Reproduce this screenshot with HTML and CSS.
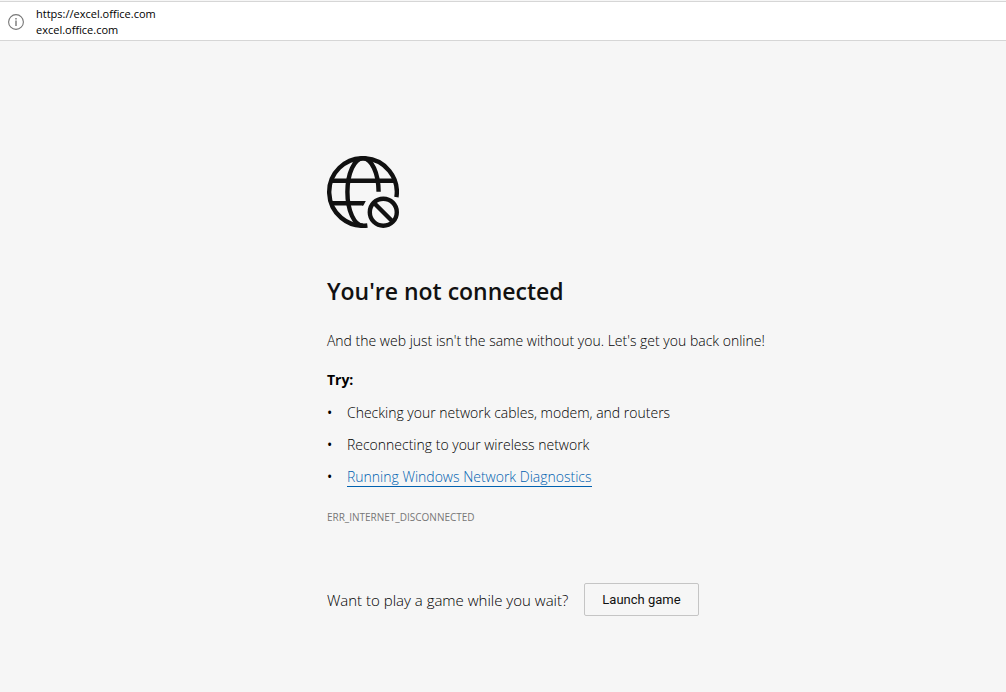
FILE: index.html
```
<!DOCTYPE html>
<html lang="en">
<head>
   <meta charset="UTF-8">
   <meta name="viewport" content="width=device-width, initial-scale=1.0">
   <title>excel.office.com</title>
   <link rel="stylesheet" href="styles.css">
</head>
<body>
   <header class="site-bar">
      <svg class="info-icon" viewBox="0 0 16 16" aria-hidden="true">
         <circle cx="8" cy="8" r="7.4" fill="none" stroke="#767676" stroke-width="1.1"/>
         <path d="M7.3 4h1.4v1.4H7.3zM7.3 6.6h1.4V12H7.3z" fill="#767676"/>
      </svg>
      <div class="site-text">
         <div>https://excel.office.com</div>
         <div>excel.office.com</div>
      </div>
   </header>

   <main class="content">
      <svg class="globe" viewBox="0 0 72 72" fill="none" stroke="#111" stroke-width="4.4" aria-hidden="true">
         <path d="M69.4 41.2A33.8 33.8 0 1 0 40.4 69.5"/>
         <path d="M36 2.2A15.6 33.8 0 0 0 36 69.8"/>
         <path d="M36 2.2A15.6 33.8 0 0 1 51.6 35.7"/>
         <path d="M4 24.7h64M4 47.3h32"/>
         <path d="M35 45.1h3.8l-2.4 4.4H35z" fill="#111" stroke="none"/>
         <circle cx="56.3" cy="56.2" r="13.5"/>
         <path d="M46.8 46.7l19 19"/>
      </svg>

      <h1>You're not connected</h1>
      <p class="message">And the web just isn't the same without you. Let's get you back online!</p>

      <h2>Try:</h2>
      <ul class="tips">
         <li>Checking your network cables, modem, and routers</li>
         <li>Reconnecting to your wireless network</li>
         <li><a href="#">Running Windows Network Diagnostics</a></li>
      </ul>

      <div class="error-code">ERR_INTERNET_DISCONNECTED</div>

      <div class="game">
         <span>Want to play a game while you wait?</span>
         <button type="button">Launch game</button>
      </div>
   </main>
</body>
</html>
```
FILE: styles.css
```
* {
   box-sizing: border-box;
}
body {
   margin: 0;
   background: #f6f6f6;
   color: #000;
   font-family: "Segoe UI", "Open Sans", "Noto Sans", sans-serif;
   font-size: 14px;
   font-weight: 330;
   line-height: 20px;
}
.site-bar {
   display: flex;
   align-items: center;
   gap: 12px;
   margin-top: 1px;
   padding: 4px 8px 2px;
   background: #fff;
   border-top: 1px solid #d6d6d6;
   border-bottom: 1px solid #d6d6d6;
   font-size: 11px;
   font-weight: 400;
   line-height: 16px;
}
.info-icon {
   width: 16px;
   height: 16px;
}
.content {
   padding: 115px 16px 32px 32.5%;
}
.globe {
   display: block;
   width: 72px;
   height: 72px;
}
h1 {
   margin: 47px 0 0;
   color: #111;
   font-size: 23px;
   line-height: 32px;
   font-weight: 650;
}
.message {
   margin: 24px 0 0;
}
h2 {
   margin: 19px 0 0;
   font-size: 14px;
   line-height: 20px;
   font-weight: 700;
}
.tips {
   margin: 13px 0 0;
   padding: 0;
   list-style: none;
}
.tips li {
   display: flex;
   gap: 14px;
   margin-bottom: 12px;
}
.tips li::before {
   content: "•";
   width: 6px;
   font-weight: 400;
}
.tips a {
   color: #0061b0;
   text-decoration: none;
   border-bottom: 1px solid #0061b0;
   line-height: 19px;
}
.error-code {
   margin-top: 20px;
   font-size: 10px;
   font-weight: 400;
   line-height: 20px;
   color: #767676;
}
.game {
   display: flex;
   flex-wrap: wrap;
   align-items: center;
   gap: 16px;
   margin-top: 56px;
   font-size: 15px;
}
.game button {
   padding: 6px 17px;
   background: transparent;
   border: 1px solid #c5c5c5;
   border-radius: 2px;
   color: #111;
   font-family: Roboto, sans-serif;
   font-size: 13px;
   line-height: 19px;
   cursor: pointer;
}
```
